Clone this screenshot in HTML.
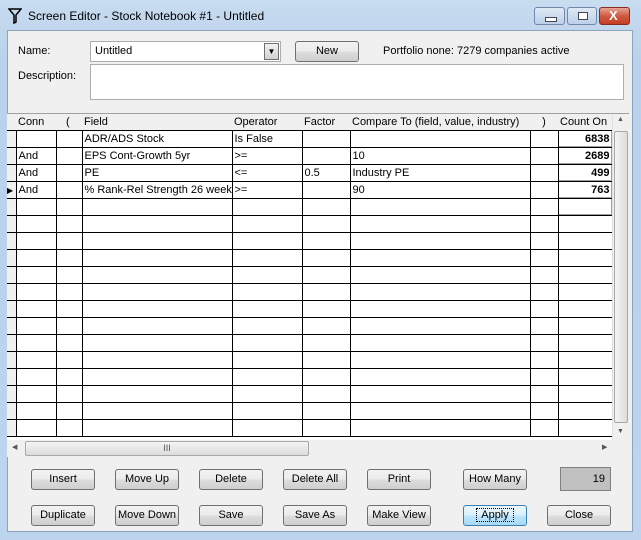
<!DOCTYPE html>
<html><head><style>
body{margin:0;width:641px;height:540px;overflow:hidden;font-family:"Liberation Sans",Arial,sans-serif;font-size:11px;color:#000;background:#bcd3ec;position:relative}
.abs{position:absolute}
.frame{left:0;top:0;width:641px;height:540px;background:linear-gradient(#c9dcf0,#b9d1ea 60px,#bcd4ee);}
.client{left:7px;top:30px;width:626px;height:502px;background:#f0f0f0;border:1px solid #8da2bb;box-sizing:border-box}
.tb{top:7px;height:18px;border:1px solid #6f87a8;border-radius:3px;background:linear-gradient(#dfe9f5,#bcd0e8);box-sizing:border-box}
.btn{height:21px;border:1px solid #707070;border-radius:3px;background:linear-gradient(#f2f2f2,#ebebeb 50%,#dddddd 51%,#cfcfcf);box-sizing:border-box;text-align:center;line-height:19px;font-size:11px;white-space:nowrap;overflow:hidden}
table{border-collapse:collapse;table-layout:fixed;background:#fff}
td{border:1px solid #000;height:16px;padding:0 2px;white-space:nowrap;overflow:hidden;font-size:11px;line-height:15px}
tr.h td{background:#f0f0f0;border-top:none;border-left:none;border-right:none;border-bottom:1px solid #000}
td.c{text-align:right;font-weight:bold;border:1px solid #000;box-shadow:inset -1px -1px #a0a0a0,inset 1px 1px #fff}
td.rh{border-left:none;background:#f0f0f0;padding:0}
</style></head><body>
<div class="abs frame"></div>
<svg class="abs" style="left:8px;top:8px" width="14" height="16" viewBox="0 0 14 16"><path d="M1 1H13L8 7V14L6 15V7Z" fill="none" stroke="#000" stroke-width="1.5"/></svg>
<div class="abs" style="left:28px;top:9px;font-size:12px">Screen Editor - Stock Notebook #1 - Untitled</div>
<div class="abs tb" style="left:534px;width:31px"><div class="abs" style="left:10px;top:9px;width:10px;height:3px;border:1px solid #445;background:#fff"></div></div>
<div class="abs tb" style="left:567px;width:30px"><div class="abs" style="left:10px;top:4px;width:8px;height:6px;border:1px solid #445;background:#fff"></div></div>
<div class="abs tb" style="left:599px;width:31px;border-color:#8a2a20;background:linear-gradient(#e8a493,#cf5a40 50%,#c33d22)"><div class="abs" style="left:9px;top:0px;color:#fff;font-weight:bold;font-size:13px">X</div></div>
<div class="abs client"></div>
<div class="abs" style="left:18px;top:45px">Name:</div>
<div class="abs" style="left:90px;top:41px;width:191px;height:21px;border:1px solid #abadb3;background:#fff;box-sizing:border-box"><span class="abs" style="left:4px;top:3px">Untitled</span><div class="abs" style="right:1px;top:1px;width:15px;height:17px;border:1px solid #707070;background:linear-gradient(#f2f2f2,#d0d0d0);box-sizing:border-box;font-size:8px;text-align:center;line-height:15px">▼</div></div>
<div class="abs btn" style="left:295px;top:41px;width:64px">New</div>
<div class="abs" style="left:383px;top:45px;font-size:11px">Portfolio none: 7279 companies active</div>
<div class="abs" style="left:18px;top:70px">Description:</div>
<div class="abs" style="left:90px;top:64px;width:534px;height:36px;border:1px solid #abadb3;background:#fff;box-sizing:border-box"></div>
<div class="abs" style="left:7px;top:113px;width:622px;height:343px;background:#fff;border-top:1px solid #a0a0a0;overflow:hidden">
<table class="abs" style="left:0;top:0;width:605px">
<colgroup><col style="width:9px"><col style="width:40px"><col style="width:26px"><col style="width:150px"><col style="width:70px"><col style="width:48px"><col style="width:180px"><col style="width:28px"><col style="width:54px"></colgroup>
<tr class="h"><td class="rh"></td><td>Conn</td><td style="padding-left:10px">(</td><td>Field</td><td>Operator</td><td>Factor</td><td>Compare To (field, value, industry)</td><td style="text-align:center">)</td><td>Count On</td></tr>
<tr><td class="rh"></td><td></td><td></td><td>ADR/ADS Stock</td><td>Is False</td><td></td><td></td><td></td><td class="c">6838</td></tr>
<tr><td class="rh"></td><td>And</td><td></td><td>EPS Cont-Growth 5yr</td><td>&gt;=</td><td></td><td>10</td><td></td><td class="c">2689</td></tr>
<tr><td class="rh"></td><td>And</td><td></td><td>PE</td><td>&lt;=</td><td>0.5</td><td>Industry PE</td><td></td><td class="c">499</td></tr>
<tr><td class="rh" style="font-size:8px">▶</td><td>And</td><td></td><td>% Rank-Rel Strength 26 week</td><td>&gt;=</td><td></td><td>90</td><td></td><td class="c">763</td></tr>
<tr><td class="rh"></td><td></td><td></td><td></td><td></td><td></td><td></td><td></td><td class="c"></td></tr>
<tr><td class="rh"></td><td></td><td></td><td></td><td></td><td></td><td></td><td></td><td></td></tr>
<tr><td class="rh"></td><td></td><td></td><td></td><td></td><td></td><td></td><td></td><td></td></tr>
<tr><td class="rh"></td><td></td><td></td><td></td><td></td><td></td><td></td><td></td><td></td></tr>
<tr><td class="rh"></td><td></td><td></td><td></td><td></td><td></td><td></td><td></td><td></td></tr>
<tr><td class="rh"></td><td></td><td></td><td></td><td></td><td></td><td></td><td></td><td></td></tr>
<tr><td class="rh"></td><td></td><td></td><td></td><td></td><td></td><td></td><td></td><td></td></tr>
<tr><td class="rh"></td><td></td><td></td><td></td><td></td><td></td><td></td><td></td><td></td></tr>
<tr><td class="rh"></td><td></td><td></td><td></td><td></td><td></td><td></td><td></td><td></td></tr>
<tr><td class="rh"></td><td></td><td></td><td></td><td></td><td></td><td></td><td></td><td></td></tr>
<tr><td class="rh"></td><td></td><td></td><td></td><td></td><td></td><td></td><td></td><td></td></tr>
<tr><td class="rh"></td><td></td><td></td><td></td><td></td><td></td><td></td><td></td><td></td></tr>
<tr><td class="rh"></td><td></td><td></td><td></td><td></td><td></td><td></td><td></td><td></td></tr>
<tr><td class="rh"></td><td></td><td></td><td></td><td></td><td></td><td></td><td></td><td></td></tr>
</table>
<div class="abs" style="left:605px;top:0;width:17px;height:326px;background:#f0f0f0;border-left:1px solid #e0e0e0"><div class="abs" style="left:4px;top:2px;font-size:7px;color:#555">▲</div><div class="abs" style="left:1px;top:17px;width:14px;height:292px;border:1px solid #a8a8a8;border-radius:2px;background:linear-gradient(90deg,#f4f4f4,#dcdcdc);box-sizing:border-box"></div><div class="abs" style="left:4px;top:314px;font-size:7px;color:#555">▼</div></div>
<div class="abs" style="left:0;top:326px;width:622px;height:17px;background:#f0f0f0"><div class="abs" style="left:5px;top:3px;font-size:7px;color:#555">◀</div><div class="abs" style="left:18px;top:1px;width:284px;height:15px;border:1px solid #a8a8a8;border-radius:2px;background:linear-gradient(#f4f4f4,#dcdcdc);box-sizing:border-box;text-align:center;font-size:9px;line-height:12px;color:#555">III</div><div class="abs" style="left:595px;top:3px;font-size:7px;color:#555">▶</div></div>
</div>
<div class="abs btn" style="left:31px;top:469px;width:64px">Insert</div>
<div class="abs btn" style="left:115px;top:469px;width:64px">Move Up</div>
<div class="abs btn" style="left:199px;top:469px;width:64px">Delete</div>
<div class="abs btn" style="left:283px;top:469px;width:64px">Delete All</div>
<div class="abs btn" style="left:367px;top:469px;width:64px">Print</div>
<div class="abs btn" style="left:463px;top:469px;width:64px">How Many</div>
<div class="abs" style="left:560px;top:467px;width:51px;height:24px;background:#c0c0c0;border:1px solid #808080;box-sizing:border-box;text-align:right;padding-right:5px;line-height:22px;font-size:11px">19</div>
<div class="abs btn" style="left:31px;top:505px;width:64px">Duplicate</div>
<div class="abs btn" style="left:115px;top:505px;width:64px">Move Down</div>
<div class="abs btn" style="left:199px;top:505px;width:64px">Save</div>
<div class="abs btn" style="left:283px;top:505px;width:64px">Save As</div>
<div class="abs btn" style="left:367px;top:505px;width:64px">Make View</div>
<div class="abs btn" style="left:463px;top:505px;width:64px;border-color:#3c7fb1;background:linear-gradient(#eaf6fd,#d9f0fc 50%,#bee6fd 51%,#a7d9f5)"><span style="border:1px dotted #000;padding:0 4px">Apply</span></div>
<div class="abs btn" style="left:547px;top:505px;width:64px">Close</div>
</body></html>
